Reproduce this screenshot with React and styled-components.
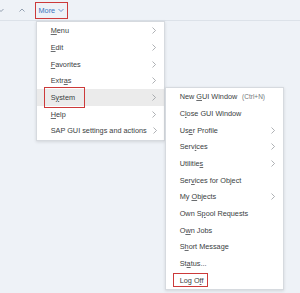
import React from 'react';
import styled, { createGlobalStyle } from 'styled-components';

const GlobalStyle = createGlobalStyle`
  html, body {
    margin: 0;
    padding: 0;
    background: #eef2f7;
  }
  body {
    font-family: "Liberation Sans", Arial, sans-serif;
  }
`

const systemItems = [
  { label: 'Menu', key: 0, sub: true },
  { label: 'Edit', key: 0, sub: true },
  { label: 'Favorites', key: 0, sub: true },
  { label: 'Extras', key: 4, sub: true },
  { label: 'System', key: 1, sub: true, active: true, mark: { left: 6.5, top: -2.5, width: 41, height: 21.5 } },
  { label: 'Help', key: 0, sub: true },
  { label: 'SAP GUI settings and actions', key: -1, sub: true },
];

const subItems = [
  { label: 'New GUI Window', key: 4, shortcut: '(Ctrl+N)' },
  { label: 'Close GUI Window', key: 1 },
  { label: 'User Profile', key: 2, sub: true },
  { label: 'Services', key: 4, sub: true },
  { label: 'Utilities', key: 8, sub: true },
  { label: 'Services for Object', key: 3 },
  { label: 'My Objects', key: 3, sub: true },
  { label: 'Own Spool Requests', key: 5 },
  { label: 'Own Jobs', key: 1 },
  { label: 'Short Message', key: 1 },
  { label: 'Status...', key: 2 },
  { label: 'Log Off', key: 5, mark: { left: 6.5, top: 1.5, width: 35, height: 14 } },
];

const Chevron = ({ dir }) => {
  const points = {
    down: '0.5,1 3,3.5 5.5,1',
    up: '0.5,3.5 3,1 5.5,3.5',
    right: '0.5,0.5 3.5,3.5 0.5,6.5',
  }[dir];
  const size = dir === 'right' ? { w: 4, h: 7 } : { w: 6, h: 4.5 };
  return (
    <svg width={size.w} height={size.h} viewBox={`0 0 ${size.w} ${size.h}`}>
      <polyline points={points} fill="none" stroke="currentColor" strokeWidth="0.7" />
    </svg>
  );
};

const Label = ({ text, index }) => {
  if (index < 0) return text;
  return (
    <>
      {text.slice(0, index)}
      <u>{text[index]}</u>
      {text.slice(index + 1)}
    </>
  );
};

const MenuList = ({ items, ...rest }) => (
  <Panel {...rest}>
    {items.map(item => (
      <Row key={item.label} $active={item.active}>
        <Text>
          <Label text={item.label} index={item.key} />
        </Text>
        {item.shortcut && <Shortcut>{item.shortcut}</Shortcut>}
        <Arrow>{item.sub && <Chevron dir="right" />}</Arrow>
        {item.mark && (
          <Mark
            style={{
              left: item.mark.left,
              top: item.mark.top,
              width: item.mark.width,
              height: item.mark.height,
            }}
          />
        )}
      </Row>
    ))}
  </Panel>
);

const App = () => (
  <Page>
    <GlobalStyle />
    <Toolbar>
      <ToolIcon $left={-2}><Chevron dir="down" /></ToolIcon>
      <ToolIcon $left={15}><Chevron dir="up" /></ToolIcon>
      <MoreButton>
        More
        <Chevron dir="down" />
      </MoreButton>
    </Toolbar>
    <MenuList items={systemItems} $left={36} $top={21} $width={129} />
    <MenuList items={subItems} $left={165} $top={87} $width={119} />
  </Page>
);

export default App;

const Page = styled.div`
  position: relative;
  width: 300px;
  height: 293px;
  overflow: hidden;
  background: #eef2f7;
`

const Toolbar = styled.div`
  display: flex;
  align-items: center;
  height: 21px;
  border-bottom: 1px solid #dce2e9;
  box-sizing: border-box;
`

const ToolIcon = styled.span`
  display: flex;
  margin-left: ${p => p.$left}px;
  color: #6b7d91;
`

const MoreButton = styled.span`
  display: flex;
  align-items: center;
  gap: 3px;
  box-sizing: border-box;
  height: 17px;
  margin-left: 10px;
  margin-top: 1px;
  padding: 0 3px 0 2.5px;
  border: 1.5px solid #cc3a3a;
  color: #3a74c0;
  font-size: 7.3px;
`

const Panel = styled.div`
  position: absolute;
  left: ${p => p.$left}px;
  top: ${p => p.$top}px;
  width: ${p => p.$width}px;
  box-sizing: border-box;
  padding: 0.5px 0 1px;
  background: #ffffff;
  border: 1px solid #d6dadf;
  box-shadow: 0 1px 3px rgba(0, 0, 0, 0.12);
`

const Row = styled.div`
  position: relative;
  display: flex;
  align-items: center;
  height: 16.67px;
  padding: 0 8px 0 13.7px;
  background: ${p => (p.$active ? '#ebebeb' : 'transparent')};
  color: #3a3e42;
  font-size: 7.3px;
  white-space: nowrap;

  u {
    text-decoration-thickness: 0.5px;
    text-underline-offset: 1px;
    text-decoration-color: #6a6d70;
  }
`

const Text = styled.span`
  flex: 1;
`

const Shortcut = styled.span`
  font-size: 6.5px;
  color: #73777b;
`

const Arrow = styled.span`
  display: flex;
  width: 4px;
  margin-left: 6px;
  color: #8d9195;
`

const Mark = styled.span`
  position: absolute;
  box-sizing: border-box;
  border: 1.5px solid #cc3a3a;
  pointer-events: none;
`
